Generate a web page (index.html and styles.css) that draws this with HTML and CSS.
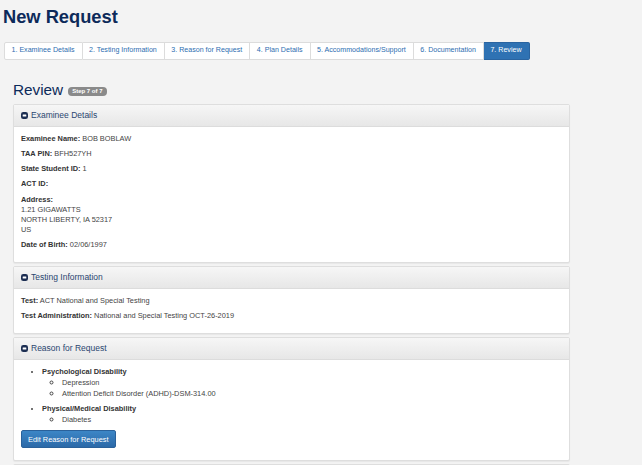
FILE: index.html
```html
<!DOCTYPE html>
<html>
<head>
<meta charset="utf-8">
<title>New Request</title>
<link rel="stylesheet" href="styles.css">
</head>
<body>
<h1 class="page-title">New Request</h1>
<ul class="steps">
  <li class="step"><a href="#">1. Examinee Details</a></li>
  <li class="step"><a href="#">2. Testing Information</a></li>
  <li class="step"><a href="#">3. Reason for Request</a></li>
  <li class="step"><a href="#">4. Plan Details</a></li>
  <li class="step"><a href="#">5. Accommodations/Support</a></li>
  <li class="step"><a href="#">6. Documentation</a></li>
  <li class="step active"><a href="#">7. Review</a></li>
</ul>
<main class="content">
  <h2 class="section-title">Review <span class="badge">Step 7 of 7</span></h2>

  <section class="panel">
    <div class="panel-heading">
      <svg class="toggle" viewBox="0 0 7 7" width="7" height="7"><rect x="0" y="0" width="7" height="7" rx="2.3" fill="#1c2e52"/><rect x="1.7" y="2.4" width="3.6" height="2.2" rx="0.4" fill="#fff"/></svg>
      <span>Examinee Details</span>
    </div>
    <div class="panel-body">
      <p><b>Examinee Name:</b> BOB BOBLAW</p>
      <p><b>TAA PIN:</b> BFH527YH</p>
      <p><b>State Student ID:</b> 1</p>
      <p><b>ACT ID:</b></p>
      <p><b>Address:</b><br>1.21 GIGAWATTS<br>NORTH LIBERTY, IA 52317<br>US</p>
      <p><b>Date of Birth:</b> 02/06/1997</p>
    </div>
  </section>

  <section class="panel">
    <div class="panel-heading">
      <svg class="toggle" viewBox="0 0 7 7" width="7" height="7"><rect x="0" y="0" width="7" height="7" rx="2.3" fill="#1c2e52"/><rect x="1.7" y="2.4" width="3.6" height="2.2" rx="0.4" fill="#fff"/></svg>
      <span>Testing Information</span>
    </div>
    <div class="panel-body">
      <p><b>Test:</b> ACT National and Special Testing</p>
      <p><b>Test Administration:</b> National and Special Testing OCT-26-2019</p>
    </div>
  </section>

  <section class="panel">
    <div class="panel-heading">
      <svg class="toggle" viewBox="0 0 7 7" width="7" height="7"><rect x="0" y="0" width="7" height="7" rx="2.3" fill="#1c2e52"/><rect x="1.7" y="2.4" width="3.6" height="2.2" rx="0.4" fill="#fff"/></svg>
      <span>Reason for Request</span>
    </div>
    <div class="panel-body">
      <ul class="reasons">
        <li><b>Psychological Disability</b>
          <ul class="sub">
            <li>Depression</li>
            <li>Attention Deficit Disorder (ADHD)-DSM-314.00</li>
          </ul>
        </li>
        <li><b>Physical/Medical Disability</b>
          <ul class="sub">
            <li>Diabetes</li>
          </ul>
        </li>
      </ul>
      <button class="btn">Edit Reason for Request</button>
    </div>
  </section>

  <section class="panel">
    <div class="panel-heading"></div>
  </section>
</main>
</body>
</html>
```

FILE: styles.css
```css
html, body {
  margin: 0;
  padding: 0;
}
body {
  background: #f3f3f3;
  font-family: "Liberation Sans", Arial, sans-serif;
  color: #333;
  overflow: hidden;
}
.page-title {
  margin: 0;
  padding: 6px 0 0 3px;
  font-size: 18.3px;
  line-height: 22px;
  font-weight: bold;
  color: #0c2a5a;
}
.steps {
  list-style: none;
  margin: 14px 0 0 4px;
  padding: 0;
  display: flex;
}
.step {
  background: #fff;
  border: 1px solid #dcdcdc;
  border-left: none;
}
.step:first-child {
  border-left: 1px solid #dcdcdc;
  border-radius: 2px 0 0 2px;
}
.step a {
  display: block;
  padding: 0 7px 0 6.5px;
  font-size: 7.1px;
  line-height: 15.5px;
  color: #2d6db0;
  text-decoration: none;
}
.step.active {
  background: #2f72b3;
  border-color: #2a64a0;
  border-radius: 0 2px 2px 0;
}
.step.active a {
  color: #fff;
}
.content {
  width: 557px;
  margin-left: 13px;
}
.section-title {
  margin: 21px 0 5px 0;
  font-size: 15.3px;
  line-height: 18px;
  font-weight: normal;
  color: #0c2a5a;
  display: flex;
  align-items: center;
  gap: 5px;
}
.badge {
  display: inline-block;
  background: #8a8a8a;
  color: #fff;
  font-size: 6px;
  font-weight: bold;
  line-height: 8.5px;
  padding: 0 4px;
  border-radius: 4px;
  margin-top: 4px;
}
.panel {
  background: #fff;
  border: 1px solid #dedede;
  border-radius: 2px;
  box-shadow: 0 1px 1px rgba(0,0,0,0.05);
  margin-bottom: 3px;
}
.panel-heading {
  display: flex;
  align-items: center;
  gap: 3px;
  height: 21px;
  padding: 0 7px;
  background: linear-gradient(#f6f6f6, #e7e7e7);
  border-bottom: 1px solid #dcdcdc;
  font-size: 8.5px;
  color: #2a4670;
}
.toggle {
  display: block;
  flex: none;
}
.panel-body {
  padding: 7px 7px 6.5px 7px;
  font-size: 7.4px;
  line-height: 10px;
  color: #444;
}
.panel-body p {
  margin: 0 0 5.3px 0;
}
.panel-body b {
  color: #333;
}
.reasons {
  margin: 0;
  padding-left: 21px;
  list-style: disc;
}
.reasons > li {
  margin-bottom: 5.3px;
}
.sub {
  margin: 0;
  padding-left: 20px;
  list-style-type: circle;
}
.sub li::marker {
  font-size: 9px;
}
.btn {
  display: block;
  margin: 0 0 5px 0;
  height: 18px;
  padding: 0 6px;
  font-family: "Liberation Sans", Arial, sans-serif;
  font-size: 7.4px;
  color: #fff;
  background: linear-gradient(#3c86c6, #2b69a8);
  border: 1px solid #2a619a;
  border-radius: 2px;
}
```
